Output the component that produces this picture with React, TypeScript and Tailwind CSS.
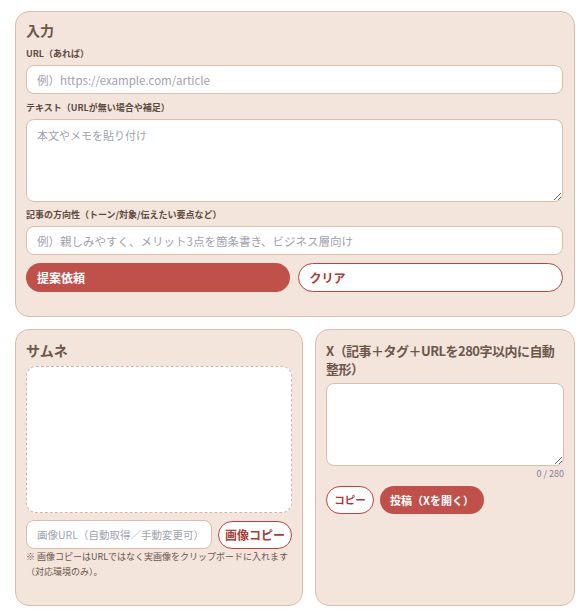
import React from 'react';

const font = { fontFamily: '"Noto Sans CJK JP", "Noto Sans", sans-serif' };

function Label({ children }: { children: React.ReactNode }) {
  return <div className="text-[9px] font-semibold leading-[14px] text-[#5e4a3f]">{children}</div>;
}

const field =
  'w-full rounded-[8px] border border-[#dcbcab] bg-white px-[10px] text-[11.5px] text-[#4a3b33] outline-none placeholder:text-[#a1a3ae]';

export default function App() {
  return (
    <div className="min-h-[609px] bg-white pl-[15px] pt-[11px] text-[#5e4a3f]" style={font}>
      {/* 入力 */}
      <section className="w-[560px] rounded-[14px] border border-[#dcbcab] bg-[#f3e5dc] pb-[24px] pl-[10px] pr-[11px] pt-[8px]">
        <h2 className="text-[14px] font-semibold leading-[20px] text-[#6d564a]">入力</h2>
        <div className="mt-[7px]">
          <Label>URL（あれば）</Label>
          <input className={`mt-[4px] h-[29px] ${field}`} placeholder="例）https://example.com/article" />
        </div>
        <div className="mt-[7px]">
          <Label>テキスト（URLが無い場合や補足）</Label>
          <textarea
            className={`mt-[4px] block h-[83px] resize-y py-[7px] text-[11px] ${field}`}
            placeholder="本文やメモを貼り付け"
          />
        </div>
        <div className="mt-[6px]">
          <Label>記事の方向性（トーン/対象/伝えたい要点など）</Label>
          <input
            className={`mt-[4px] h-[29px] ${field}`}
            placeholder="例）親しみやすく、メリット3点を箇条書き、ビジネス層向け"
          />
        </div>
        <div className="mt-[8px] flex gap-[8px]">
          <button className="h-[29px] flex-1 rounded-full bg-[#c0504a] px-[11px] text-left text-[12px] font-semibold text-white">
            提案依頼
          </button>
          <button className="h-[29px] flex-1 rounded-full border border-[#b9433e] bg-white px-[11px] text-left text-[12px] font-semibold text-[#a83c37]">
            クリア
          </button>
        </div>
      </section>

      <div className="mt-[12px] flex w-[560px] gap-[12px]">
        {/* サムネ */}
        <section className="flex h-[277px] w-[288px] flex-col rounded-[14px] border border-[#dcbcab] bg-[#f3e5dc] px-[10px] pt-[10px]">
          <h2 className="text-[14px] font-semibold leading-[20px] text-[#6d564a]">サムネ</h2>
          <div className="mt-[6px] h-[147px] w-full shrink-0 rounded-[10px] border border-dashed border-[#d6b3a2] bg-white" />
          <div className="mt-[7px] flex items-center gap-[6px]">
            <input
              className={`h-[29px] !w-[186px] !text-[10.5px] ${field}`}
              placeholder="画像URL（自動取得／手動変更可）"
            />
            <button className="h-[28px] flex-1 rounded-full border border-[#b9433e] bg-white text-[12px] font-semibold text-[#a83c37]">
              画像コピー
            </button>
          </div>
          <p className="mt-[0px] text-[9px] leading-[15px] text-[#6d564a]">
            ※ 画像コピーはURLではなく実画像をクリップボードに入れます（対応環境のみ）。
          </p>
        </section>

        {/* X */}
        <section className="flex h-[277px] flex-1 flex-col rounded-[14px] border border-[#dcbcab] bg-[#f3e5dc] px-[10px] pt-[12px]">
          <h2 className="text-[13px] font-semibold leading-[18px] tracking-[-0.04em] text-[#6d564a]">
            X（記事＋タグ＋URLを280字以内に自動整形）
          </h2>
          <textarea className={`mt-[5px] block h-[83px] shrink-0 resize-y py-[7px] ${field}`} />
          <div className="mt-[2px] text-right text-[9px] leading-[12px] text-[#84838f]">0 / 280</div>
          <div className="mt-[6px] flex gap-[6px]">
            <button className="h-[28px] w-[48px] rounded-full border border-[#b9433e] bg-white text-[10.5px] font-semibold text-[#a83c37]">
              コピー
            </button>
            <button className="h-[28px] w-[104px] rounded-full bg-[#c0504a] text-[11px] font-semibold text-white">
              投稿（Xを開く）
            </button>
          </div>
        </section>
      </div>
    </div>
  );
}
